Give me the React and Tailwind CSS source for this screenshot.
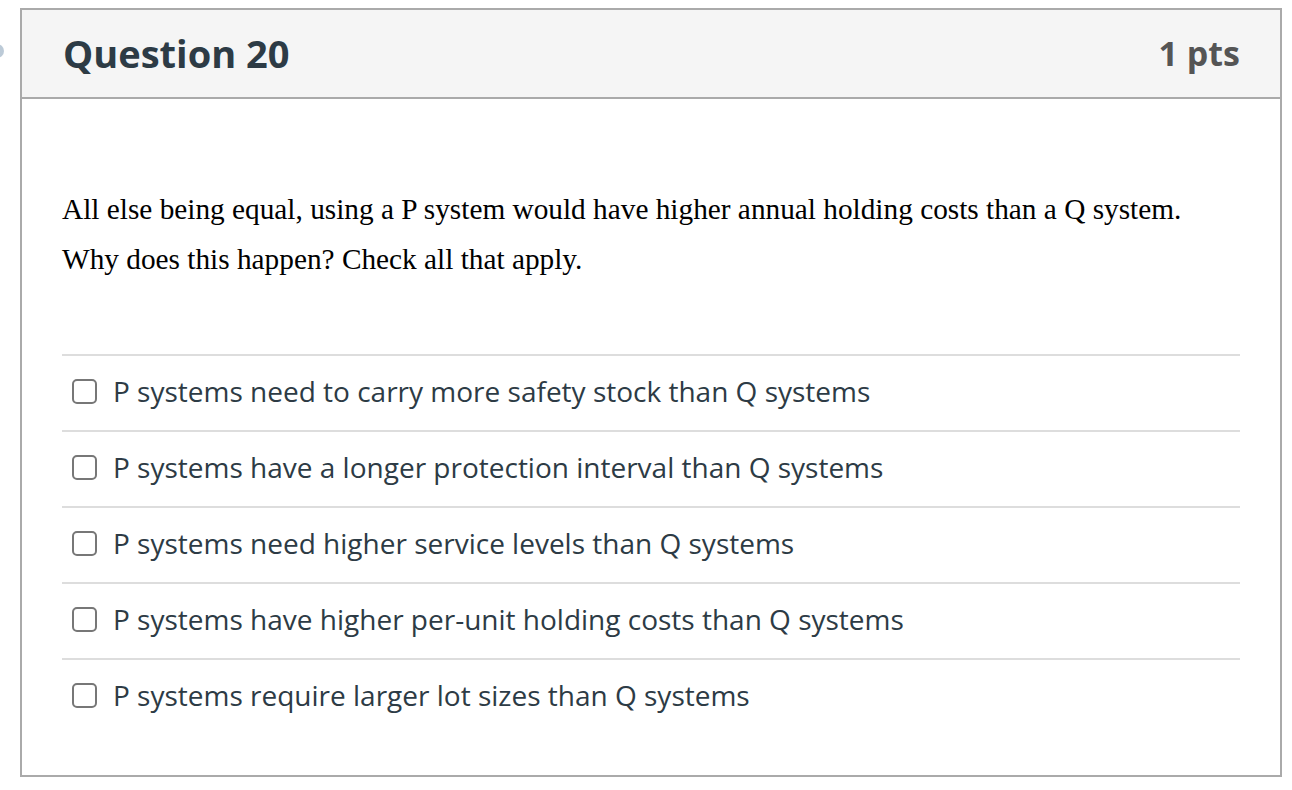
export default function App() {
  const answers = [
    'P systems need to carry more safety stock than Q systems',
    'P systems have a longer protection interval than Q systems',
    'P systems need higher service levels than Q systems',
    'P systems have higher per-unit holding costs than Q systems',
    'P systems require larger lot sizes than Q systems',
  ]

  return (
    <div className="relative w-[1292px] h-[790px] bg-white overflow-hidden">
      {/* cut-off nav dot on the left edge */}
      <div className="absolute left-[-10px] top-[44px] w-[14px] h-[14px] rounded-full bg-[#9fb4c6] opacity-70"></div>

      <div className="ml-[20px] mt-[8px] w-[1262px] border-2 border-[#aaaaaa]">
        <div className="flex items-center justify-between h-[89px] bg-[#f5f5f5] border-b-2 border-[#aaaaaa] pl-[41px] pr-[40px]">
          <h2 className="text-[38px] font-bold text-[#2d3b45] font-['Open_Sans',sans-serif]">Question 20</h2>
          <span className="text-[34px] font-bold text-[#555555] font-['Open_Sans',sans-serif]">1 pts</span>
        </div>

        <div className="px-[40px] pt-[85px] pb-[41px]">
          <div className="font-['Liberation_Serif',serif] text-[29.3px] leading-[50px] text-black">
            <p>All else being equal, using a P system would have higher annual holding costs than a Q system.</p>
            <p>Why does this happen? Check all that apply.</p>
          </div>

          <div className="mt-[70px]">
            {answers.map((a, i) => (
              <label
                key={i}
                className="flex items-center h-[76px] pb-[4px] border-t-2 border-[#dddddd] font-['Open_Sans',sans-serif] text-[28px] text-[#2d3b45]"
              >
                <span className="ml-[10px] mr-[16px] w-[25px] h-[25px] rounded-[5px] border-2 border-[#777777] bg-white shrink-0"></span>
                {a}
              </label>
            ))}
          </div>
        </div>
      </div>
    </div>
  )
}
